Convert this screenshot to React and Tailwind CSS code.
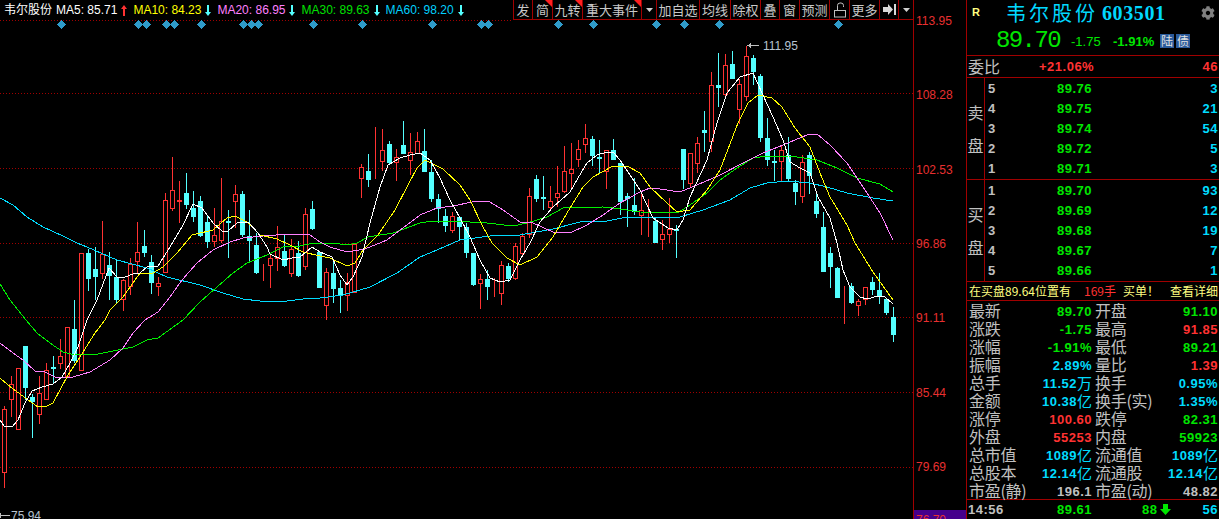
import React from "react";
import { FaCog } from "react-icons/fa";

const RED = "#ff3232";
const CYAN = "#54ffff";

// [colour, high, bodyTop, bodyBottom, low], one candle every 7px
const candles = [
  ["r", 406, 409, 472, 488], ["r", 376, 384, 399, 417], ["r", 368, 368, 429, 429], ["c", 346, 346, 388, 400],
  ["c", 394, 397, 402, 438], ["r", 376, 393, 414, 424], ["r", 363, 370, 399, 399], ["c", 356, 367, 368, 383],
  ["r", 339, 356, 363, 369], ["r", 327, 327, 376, 376], ["c", 300, 329, 361, 363], ["r", 253, 253, 370, 370],
  ["c", 249, 253, 279, 291], ["c", 247, 269, 277, 300], ["r", 221, 254, 273, 279], ["c", 252, 265, 276, 300],
  ["c", 260, 277, 300, 303], ["r", 279, 280, 299, 311], ["r", 258, 264, 286, 295], ["r", 222, 252, 261, 273],
  ["c", 230, 246, 253, 257], ["c", 255, 262, 283, 294], ["r", 277, 283, 286, 296], ["r", 193, 200, 272, 272],
  ["r", 157, 190, 208, 211], ["r", 181, 200, 201, 223], ["c", 173, 193, 205, 209], ["c", 191, 208, 217, 222],
  ["c", 196, 201, 236, 237], ["c", 216, 222, 242, 248], ["r", 208, 235, 241, 247], ["r", 178, 221, 240, 243],
  ["c", 210, 221, 222, 258], ["r", 185, 194, 201, 228], ["c", 191, 194, 235, 237], ["c", 210, 236, 241, 263],
  ["c", 233, 245, 273, 274], ["r", 264, 265, 265, 281], ["r", 253, 258, 265, 288], ["r", 226, 247, 258, 271],
  ["c", 234, 251, 266, 267], ["r", 239, 249, 273, 277], ["c", 241, 253, 276, 277], ["r", 208, 214, 266, 270],
  ["c", 201, 209, 229, 230], ["c", 252, 252, 288, 288], ["r", 268, 272, 305, 320], ["c", 262, 273, 289, 303],
  ["c", 280, 288, 295, 313], ["r", 273, 282, 295, 311], ["r", 244, 244, 292, 292], ["r", 164, 167, 178, 198],
  ["c", 154, 171, 180, 187], ["r", 127, 161, 161, 179], ["r", 129, 150, 161, 171], ["c", 141, 144, 163, 164],
  ["r", 149, 157, 162, 181], ["c", 121, 145, 154, 154], ["r", 133, 152, 160, 175], ["r", 132, 141, 153, 153],
  ["c", 129, 151, 172, 172], ["c", 160, 172, 199, 202], ["c", 194, 199, 209, 223], ["c", 209, 216, 226, 232],
  ["r", 212, 216, 230, 233], ["c", 216, 217, 227, 241], ["c", 223, 227, 253, 258], ["c", 253, 253, 285, 286],
  ["r", 274, 279, 283, 309], ["c", 270, 279, 287, 300], ["r", 278, 288, 288, 297], ["r", 261, 265, 293, 305],
  ["c", 263, 266, 279, 282], ["r", 243, 246, 278, 280], ["r", 233, 236, 253, 257], ["r", 188, 196, 234, 238],
  ["c", 175, 179, 199, 202], ["c", 176, 197, 199, 210], ["r", 186, 201, 207, 210], ["r", 166, 193, 197, 207],
  ["r", 146, 171, 191, 193], ["r", 143, 169, 173, 190], ["r", 140, 149, 159, 167], ["r", 124, 138, 144, 153],
  ["c", 136, 139, 156, 166], ["c", 140, 157, 159, 173], ["r", 150, 150, 171, 189], ["c", 139, 150, 160, 160],
  ["c", 163, 163, 202, 215], ["c", 193, 196, 199, 227], ["c", 178, 205, 212, 215], ["r", 192, 210, 215, 235],
  ["r", 199, 214, 214, 237], ["c", 217, 221, 243, 243], ["r", 220, 234, 239, 250], ["r", 198, 229, 234, 243],
  ["c", 225, 229, 231, 258], ["c", 149, 149, 180, 189], ["r", 153, 153, 183, 188], ["r", 137, 143, 163, 173],
  ["c", 111, 130, 133, 152], ["r", 72, 85, 141, 152], ["c", 53, 85, 88, 107], ["r", 54, 65, 94, 96],
  ["c", 51, 64, 79, 79], ["r", 79, 84, 109, 124], ["r", 46, 56, 96, 101], ["c", 55, 58, 72, 85],
  ["c", 74, 76, 138, 142], ["c", 118, 138, 160, 166], ["c", 150, 161, 162, 181], ["r", 146, 150, 161, 181],
  ["c", 137, 155, 179, 181], ["c", 180, 183, 192, 205], ["r", 155, 162, 196, 203], ["c", 152, 155, 176, 194],
  ["c", 192, 201, 214, 218], ["c", 212, 227, 272, 272], ["c", 247, 253, 267, 288], ["c", 267, 268, 298, 298],
  ["r", 286, 305, 305, 324], ["c", 283, 286, 303, 304], ["r", 299, 301, 305, 316], ["r", 287, 287, 299, 305],
  ["c", 277, 282, 290, 295], ["c", 273, 290, 296, 304], ["c", 299, 299, 313, 315], ["c", 307, 317, 335, 342],
];

const maLines = [
  {
    color: "#00dcff",
    points:
      "0,198 13,205 27,217 43,227 63,236 77,243 87,247 117,260 147,268 167,277 200,285 223,293 243,299 260,301 287,301 303,299 320,298 343,295 370,287 397,273 420,257 437,250 460,240 490,236 520,235 553,229 580,222 607,221 627,217 640,217 680,217 703,210 730,200 750,188 767,183 787,181 810,183 827,187 847,193 873,198 893,201",
  },
  {
    color: "#00f000",
    points:
      "0,284 10,300 26,320 37,333 50,343 63,352 75,355 98,354 113,351 133,347 147,340 158,338 183,320 200,302 217,287 233,273 247,263 267,255 283,247 300,246 313,243 320,244 333,243 347,245 357,243 368,237 393,233 420,223 433,221 453,221 487,223 513,226 527,223 547,217 563,208 603,207 613,208 640,212 677,213 687,207 707,193 720,180 737,168 753,158 767,156 790,156 817,160 837,168 857,178 880,184 893,192",
  },
  {
    color: "#ff80ff",
    points:
      "0,343 13,353 23,360 35,371 45,372 55,377 73,377 90,372 110,360 123,348 133,333 145,320 158,312 170,297 182,280 197,263 213,250 230,242 243,238 263,236 290,234 310,235 320,242 330,247 347,252 365,249 387,240 403,228 420,215 437,208 453,206 477,201 490,202 503,210 520,222 533,223 553,232 570,233 587,225 603,215 620,203 640,192 650,188 660,189 680,192 697,185 720,175 743,163 763,153 783,145 807,135 817,134 830,145 847,163 867,193 880,213 893,240",
  },
  {
    color: "#ffff00",
    points:
      "0,378 8,385 28,400 38,407 47,406 53,403 68,375 80,357 95,333 105,320 110,310 123,297 140,273 153,273 163,267 177,253 192,235 213,230 227,218 235,216 247,222 260,235 277,239 290,245 303,252 320,256 330,258 347,266 355,263 363,250 378,235 395,210 408,185 417,168 425,160 443,169 460,185 470,200 482,225 492,243 507,258 520,265 537,257 553,237 567,213 583,187 593,177 613,166 627,166 640,173 650,187 667,203 677,212 690,210 707,190 720,170 738,123 748,103 758,95 772,98 782,107 795,128 810,147 820,173 830,197 847,225 855,243 873,272 893,300",
  },
  {
    color: "#ffffff",
    points:
      "0,420 4,426 12,427 18,420 25,403 32,391 42,387 53,384 62,377 70,363 78,347 87,320 97,300 109,268 117,277 125,277 133,274 140,273 147,267 158,266 170,247 182,227 193,204 202,208 213,223 222,231 228,231 237,223 248,222 258,233 267,247 270,254 283,260 292,258 300,257 312,247 320,252 332,257 340,275 347,285 353,277 362,257 370,223 380,187 388,165 400,158 410,155 420,153 430,160 440,178 450,200 460,218 470,237 480,260 490,278 500,282 510,280 520,260 530,243 540,222 553,207 570,192 578,178 587,163 597,155 607,152 613,152 620,160 630,175 640,190 653,218 668,228 677,230 683,220 690,197 707,160 717,123 727,93 740,77 753,73 762,93 773,117 783,140 790,162 800,168 810,173 818,197 830,218 837,243 843,270 850,287 860,297 867,299 878,296 885,297 893,304",
  },
];

const markers = [61, 138, 146, 166, 174, 201, 243, 251, 258, 313, 362, 432, 481, 488, 558, 593, 656, 684, 719, 838];
const gridRows = [93, 168, 243, 317, 392, 467];
const axisLabels = ["113.95", "108.28", "102.53", "96.86", "91.11", "85.44", "79.69"];

const legend = [
  { text: "MA5: 85.71", color: "text-white", arrow: "up" },
  { text: "MA10: 84.23", color: "text-[#ffff00]", arrow: "down" },
  { text: "MA20: 86.95", color: "text-[#ff80ff]", arrow: "down" },
  { text: "MA30: 89.63", color: "text-[#00e000]", arrow: "down" },
  { text: "MA60: 98.20", color: "text-[#00d0ff]", arrow: "down" },
];

const buttons = [
  { label: "发", w: "w-[19px]" },
  { label: "简", w: "w-[20px]", flag: true },
  { label: "九转", w: "w-[30px]", flag: true },
  { label: "重大事件", w: "w-[59px]", flag: true },
  { caret: true, w: "w-[15px]" },
  { label: "加自选", w: "w-[43px]" },
  { label: "均线", w: "w-[31px]" },
  { label: "除权", w: "w-[30px]" },
  { label: "叠", w: "w-[19px]" },
  { label: "窗", w: "w-[20px]" },
  { label: "预测", w: "w-[30px]" },
  { lock: true, w: "w-[20px]" },
  { label: "更多", w: "w-[30px]" },
  { jump: true, w: "w-[19px]" },
  { caret: true, w: "w-[15px]" },
];

const sellRows = [
  ["5", "89.76", "3"],
  ["4", "89.75", "21"],
  ["3", "89.74", "54"],
  ["2", "89.72", "5"],
  ["1", "89.71", "3"],
];
const buyRows = [
  ["1", "89.70", "93"],
  ["2", "89.69", "12"],
  ["3", "89.68", "19"],
  ["4", "89.67", "7"],
  ["5", "89.66", "1"],
];

const GREEN_TEXT = "text-[#00e600]";
const CYAN_TEXT = "text-[#00dcff]";
const RED_TEXT = "text-[#ff3232]";
const GREY_TEXT = "text-[#c0c0c0]";

const stats = [
  [["最新", "89.70", GREEN_TEXT], ["开盘", "91.10", GREEN_TEXT]],
  [["涨跌", "-1.75", GREEN_TEXT], ["最高", "91.85", RED_TEXT]],
  [["涨幅", "-1.91%", GREEN_TEXT], ["最低", "89.21", GREEN_TEXT]],
  [["振幅", "2.89%", CYAN_TEXT], ["量比", "1.39", RED_TEXT]],
  [["总手", "11.52", CYAN_TEXT, "万"], ["换手", "0.95%", CYAN_TEXT]],
  [["金额", "10.38", CYAN_TEXT, "亿"], ["换手(实)", "1.35%", CYAN_TEXT]],
  [["涨停", "100.60", RED_TEXT], ["跌停", "82.31", GREEN_TEXT]],
  [["外盘", "55253", RED_TEXT], ["内盘", "59923", GREEN_TEXT]],
  [["总市值", "1089", CYAN_TEXT, "亿"], ["流通值", "1089", CYAN_TEXT, "亿"]],
  [["总股本", "12.14", CYAN_TEXT, "亿"], ["流通股", "12.14", CYAN_TEXT, "亿"]],
  [["市盈(静)", "196.1", GREY_TEXT], ["市盈(动)", "48.82", GREY_TEXT]],
];

const MiniArrow = ({ dir }) => (
  <svg width="6" height="11" viewBox="0 0 6 11" className="flex-none">
    <polygon
      points={dir === "up" ? "3,0 6,4 4,4 4,11 2,11 2,4 0,4" : "3,11 6,7 4,7 4,0 2,0 2,7 0,7"}
      fill={dir === "up" ? RED : CYAN}
    />
  </svg>
);

const ToolButton = ({ item }) => (
  <div
    className={`relative flex h-full flex-none items-center justify-center border-b border-l border-[#a00000] text-[13px] leading-none text-[#c8c8c8] ${item.w}`}
  >
    {item.label}
    {item.flag && (
      <span className="absolute right-0 top-0 h-0 w-0 border-l-[7px] border-t-[7px] border-l-transparent border-t-[#ff2020]" />
    )}
    {item.caret && (
      <svg width="7" height="4" viewBox="0 0 7 4">
        <polygon points="0,0 7,0 3.5,4" fill="#d0d0d0" />
      </svg>
    )}
    {item.lock && (
      <svg width="12" height="16" viewBox="0 0 12 16" fill="none" stroke="#c0c0c0" strokeWidth="1">
        <path d="M3.5 8V3.5A2.5 2.5 0 0 1 6 1h1a2.5 2.5 0 0 1 2.5 2.5V5" />
        <rect x="0.5" y="8.5" width="11" height="6.5" />
      </svg>
    )}
    {item.jump && (
      <svg width="13" height="11" viewBox="0 0 13 11">
        <polygon points="0,3 5,3 5,0 10,5.5 5,11 5,8 0,8" fill="#d8d8d8" />
        <rect x="11" y="0" width="2" height="11" fill="#d8d8d8" />
      </svg>
    )}
  </div>
);

const Chart = () => (
  <svg width="913" height="499" viewBox="0 20 913 499" className="block">
    <g shapeRendering="crispEdges">
      <line x1="0" x2="513" y1="20.5" y2="20.5" stroke="#a00000" strokeDasharray="1 2" />
      {gridRows.map((y) => (
        <line key={y} x1="0" x2="913" y1={y + 0.5} y2={y + 0.5} stroke="#a00000" strokeDasharray="1 2" />
      ))}
      {markers.map((x) => (
        <polygon key={x} points={`${x - 4.5},24.5 ${x},20 ${x + 4.5},24.5 ${x},29`} fill="#2f9bc9" />
      ))}
      {candles.map(([kind, high, top, bottom, low], i) => {
        const color = kind === "r" ? RED : CYAN;
        const cx = 4.5 + 7 * i;
        return (
          <g key={i}>
            <line x1={cx} x2={cx} y1={high} y2={low} stroke={color} />
            {kind === "r" ? (
              <rect x={cx - 2} y={top + 0.5} width="4" height={Math.max(bottom - top, 0)} fill="#000" stroke={color} />
            ) : (
              <rect x={cx - 2.5} y={top} width="5" height={Math.max(bottom - top, 2)} fill={color} />
            )}
          </g>
        );
      })}
      {maLines.map((line) => (
        <polyline key={line.color} points={line.points} fill="none" stroke={line.color} strokeWidth="1" />
      ))}
      <line x1="749" x2="759" y1="45.5" y2="45.5" stroke="#c0c0c0" />
      <polygon points="747,45.5 751,43 751,48" fill="#c0c0c0" />
      <line x1="0.5" x2="10" y1="515.5" y2="515.5" stroke="#c0c0c0" />
      <line x1="0.5" x2="0.5" y1="513" y2="518" stroke="#c0c0c0" />
    </g>
    <text x="763" y="50" fontSize="12" fill="#b8c4d0" fontFamily="'Liberation Sans', sans-serif">
      111.95
    </text>
    <text x="11" y="520" fontSize="12" fill="#b8c4d0" fontFamily="'Liberation Sans', sans-serif">
      75.94
    </text>
  </svg>
);

const BookRows = ({ rows, title }) => (
  <div className="flex h-[102px] border-b border-[#a00000]">
    <div className="flex w-[18px] flex-none flex-col items-center justify-center gap-[17px] border-r border-[#a00000] text-[16px] leading-none text-[#c0c0c0]">
      <span>{title}</span>
      <span>盘</span>
    </div>
    <div className="flex min-w-0 flex-1 flex-col pb-[1px] pl-[3px] pr-[1px] font-['Liberation_Sans',sans-serif] text-[13px] font-bold leading-none tracking-[0.5px]">
      {rows.map(([n, price, vol]) => (
        <div key={n} className="flex flex-1 items-center">
          <span className="w-[20px] flex-none text-[#c0c0c0]">{n}</span>
          <span className={`w-[84px] flex-none text-right ${GREEN_TEXT}`}>{price}</span>
          <span className={`ml-auto ${CYAN_TEXT}`}>{vol}</span>
        </div>
      ))}
    </div>
  </div>
);

const StatCell = ({ cell, className }) => {
  const [label, value, color, unit] = cell;
  return (
    <div className={`flex items-center justify-between ${className}`}>
      <span className="mb-[3px] whitespace-nowrap text-[16px] leading-none tracking-[-0.3px] text-[#c0c0c0]">{label}</span>
      <span className={`flex items-center whitespace-nowrap font-['Liberation_Sans',sans-serif] text-[13px] font-bold leading-none tracking-[0.5px] ${color}`}>
        {value}
        {unit && <span className="mb-[2px] font-['Noto_Sans_CJK_SC',sans-serif] text-[15px] font-normal leading-none tracking-normal">{unit}</span>}
      </span>
    </div>
  );
};

const SidePanel = () => (
  <div className="flex min-w-0 flex-1 flex-col">
    <div className="h-[56px] flex-none border-b border-[#a00000]">
      <div className="flex h-[27px] items-center pb-[2px] pr-[4px]">
        <span className="ml-[5px] w-[34px] flex-none font-['Liberation_Sans',sans-serif] text-[11px] font-bold leading-none text-[#ffff80]">R</span>
        <span className="flex-none whitespace-nowrap text-[20px] font-normal leading-none tracking-[3px] text-[#00d8ff]">韦尔股份</span>
        <span className="ml-[4px] flex-none font-['Liberation_Serif',serif] text-[20px] font-bold leading-none tracking-[0.6px] text-[#00d8ff]">603501</span>
        <FaCog size={14} color="#808080" className="ml-auto flex-none" />
      </div>
      <div className="flex h-[28px] items-center">
        <span className="ml-[29px] w-[75px] flex-none whitespace-nowrap font-['Liberation_Mono',monospace] text-[24px] font-normal leading-none tracking-[-1.6px] text-[#00e600]">89.70</span>
        <span className={`w-[42px] flex-none font-['Liberation_Sans',sans-serif] text-[13px] leading-none ${GREEN_TEXT}`}>-1.75</span>
        <span className={`w-[47px] flex-none font-['Liberation_Sans',sans-serif] text-[13px] font-bold leading-none ${GREEN_TEXT}`}>-1.91%</span>
        <span className="flex h-[14px] w-[14px] flex-none items-center justify-center bg-[#2a5a9a] text-[12px] leading-none text-[#e0e0e0]">陆</span>
        <span className="ml-[2px] flex h-[14px] w-[14px] flex-none items-center justify-center bg-[#2a5a9a] text-[12px] leading-none text-[#e0e0e0]">债</span>
      </div>
    </div>
    <div className="flex h-[22px] flex-none items-center border-b border-[#a00000] pl-[1px] pr-[1px]">
      <span className="mb-[2px] w-[71px] flex-none text-[16px] leading-none text-[#c0c0c0]">委比</span>
      <span className={`font-['Liberation_Sans',sans-serif] text-[13px] font-bold leading-none tracking-[0.5px] ${RED_TEXT}`}>+21.06%</span>
      <span className={`ml-auto font-['Liberation_Sans',sans-serif] text-[13px] font-bold leading-none tracking-[0.5px] ${RED_TEXT}`}>46</span>
    </div>
    <BookRows rows={sellRows} title="卖" />
    <BookRows rows={buyRows} title="买" />
    <div className="flex h-[19px] flex-none items-center border-b border-[#a00000] pl-[2px] pr-[1px] text-[12px] leading-none text-[#ffff80]">
      <span className="w-[115px] flex-none whitespace-nowrap">在买盘89.64位置有</span>
      <span className={`w-[39px] flex-none whitespace-nowrap ${RED_TEXT}`}>169手</span>
      <span className="whitespace-nowrap">买单！</span>
      <span className="ml-auto whitespace-nowrap">查看详细</span>
    </div>
    <div className="flex h-[199px] flex-none flex-col border-b border-[#a00000] pt-[1px]">
      {stats.map(([left, right]) => (
        <div key={left[0]} className="flex h-[18px] flex-none">
          <StatCell cell={left} className="w-[125px] flex-none pl-[2px]" />
          <StatCell cell={right} className="min-w-0 flex-1 pl-[3px] pr-[1px]" />
        </div>
      ))}
    </div>
    <div className="flex min-h-0 flex-1 items-center pl-[1px] pr-[1px] font-['Liberation_Sans',sans-serif] text-[13px] font-bold leading-none tracking-[0.5px]">
      <span className="w-[75px] flex-none text-[#c0c0c0]">14:56</span>
      <span className={`w-[49px] flex-none text-right ${GREEN_TEXT}`}>89.61</span>
      <span className={`ml-[50px] ${GREEN_TEXT}`}>88</span>
      <svg width="11" height="11" viewBox="0 0 11 11" className="ml-[3px] flex-none">
        <polygon points="3,0 8,0 8,5 11,5 5.5,11 0,5 3,5" fill="#00e600" />
      </svg>
      <span className={`ml-auto ${CYAN_TEXT}`}>56</span>
    </div>
  </div>
);

const App = () => {
  return (
    <div className="flex h-[519px] w-[1219px] overflow-hidden bg-black font-['Noto_Sans_CJK_SC',sans-serif]">
      <div className="flex w-[913px] flex-none flex-col">
        <div className="flex h-[20px] flex-none">
          <div className="flex w-[513px] flex-none items-center gap-[6px] pl-[4px] font-['Liberation_Sans','Noto_Sans_CJK_SC',sans-serif] text-[12px] leading-none">
            <span className="mr-[-2px] text-white">韦尔股份</span>
            {legend.map((item) => (
              <span key={item.text} className={`flex items-center gap-[4px] whitespace-nowrap ${item.color}`}>
                {item.text}
                <MiniArrow dir={item.arrow} />
              </span>
            ))}
          </div>
          {buttons.map((item, i) => (
            <ToolButton key={i} item={item} />
          ))}
        </div>
        <Chart />
      </div>
      <div className="flex w-[54px] flex-none flex-col border-x border-[#a00000] font-['Liberation_Sans',sans-serif] text-[12px] leading-[14px] text-[#e83030]">
        <div className="flex h-[474px] flex-none flex-col justify-between pl-[2px] pt-[14px]">
          {axisLabels.map((label) => (
            <span key={label} className="h-[14px]">{label}</span>
          ))}
        </div>
        <div className="mt-[36px] h-[9px] flex-none overflow-hidden bg-[#45008c] pl-[2px] pt-[3px]">76.70</div>
      </div>
      <SidePanel />
    </div>
  );
};

export default App;
